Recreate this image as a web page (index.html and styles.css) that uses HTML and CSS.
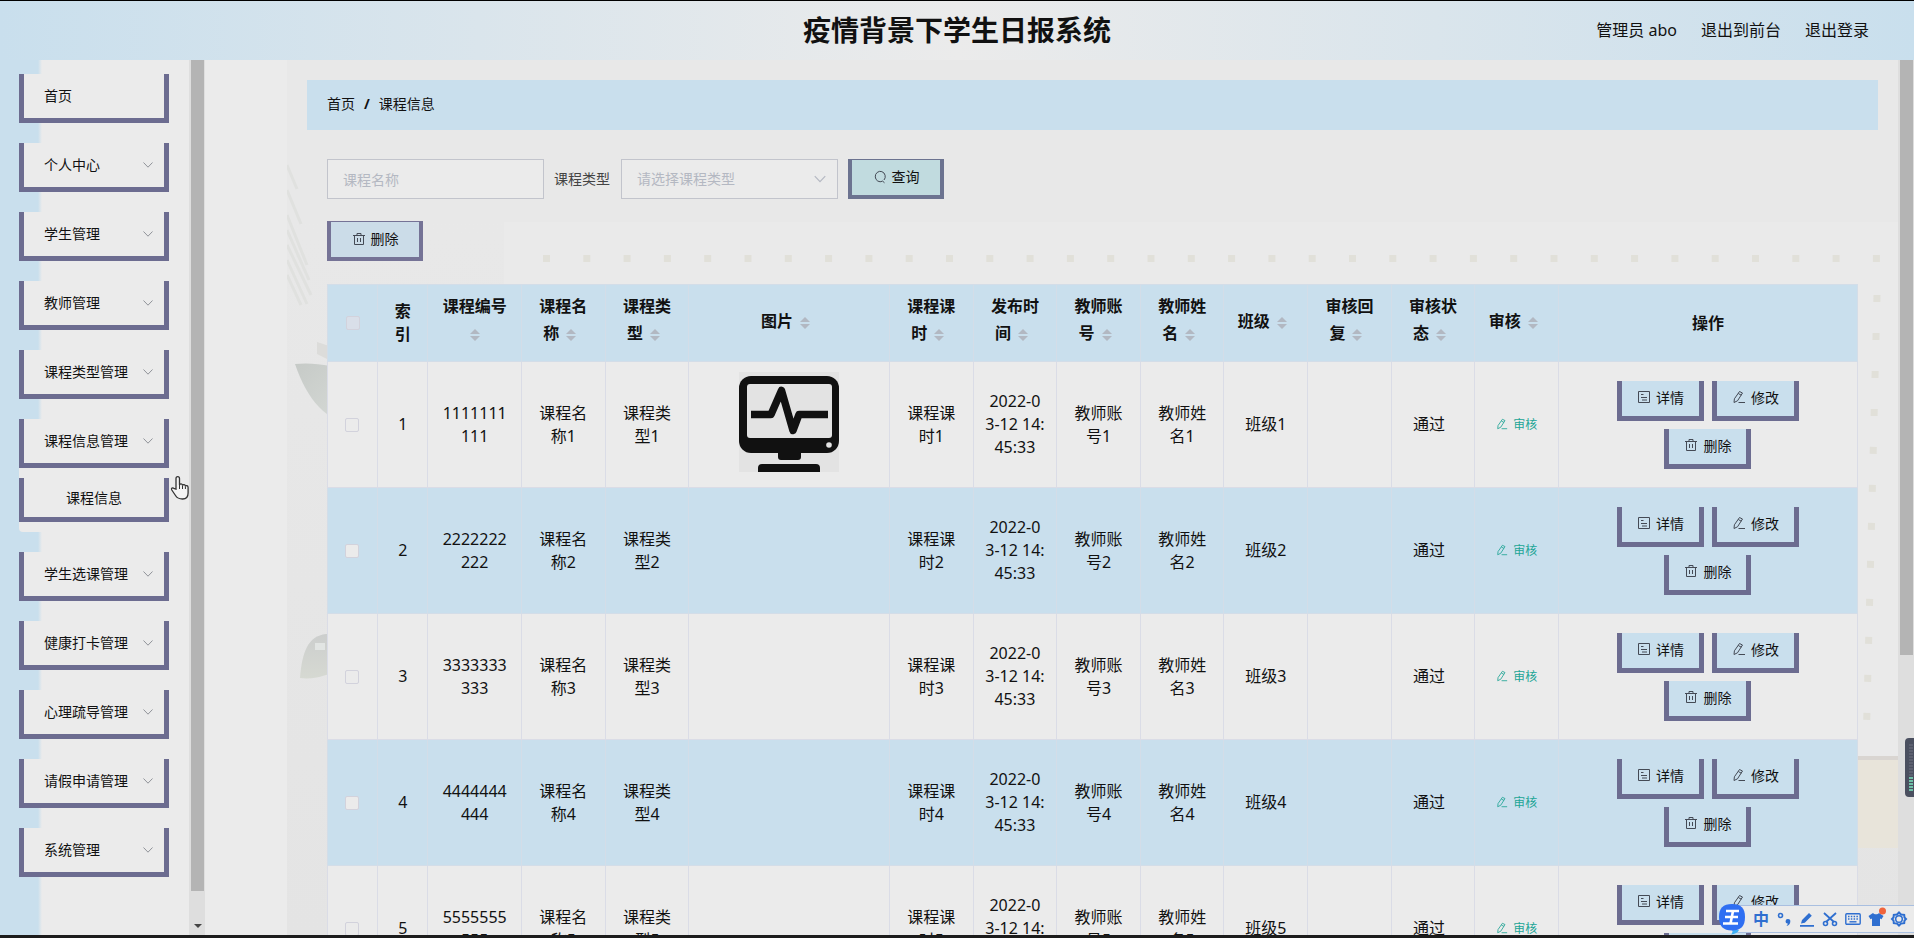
FILE: index.html
```html
<!DOCTYPE html>
<html lang="zh-CN">
<head>
<meta charset="utf-8">
<title>疫情背景下学生日报系统</title>
<link rel="stylesheet" href="styles.css">
</head>
<body>
<svg class="defs" aria-hidden="true">
  <symbol id="i-down" viewBox="0 0 12 12"><path d="M1.5 3.5 6 8.2l4.500-4.700" fill="none" stroke="currentColor"/></symbol>
  <symbol id="i-trash" viewBox="0 0 14 14"><path d="M1 3.500h12M2.500 3.500v9h9v-9M5 3.500v-2h4v2M5.500 6v4M8.500 6v4" fill="none" stroke="currentColor"/></symbol>
  <symbol id="i-search" viewBox="0 0 14 14"><path d="M9.500 11.200A5 5.200 0 1 1 11 10M9.500 11l2 1.800" fill="none" stroke="currentColor"/></symbol>
  <symbol id="i-doc" viewBox="0 0 14 14"><path d="M1.500 1.500h11v11h-11zM4 4.500h2.500M4 7.500h6M5 10h5" fill="none" stroke="currentColor"/></symbol>
  <symbol id="i-edit" viewBox="0 0 14 14"><path d="M7.500 1.500 10.500 3 5.500 10.800l-3.500 1.700.4-3.700zM6.300 3.500 9.300 5.200M6.500 12.500h6.500" fill="none" stroke="currentColor"/></symbol>
</svg>
<div class="app">
  <header class="topbar">
    <h1 class="title">疫情背景下学生日报系统</h1>
    <nav class="user"><span>管理员 abo</span><a href="#">退出到前台</a><a href="#">退出登录</a></nav>
  </header>
  <div class="body">
    <aside class="side">
      <nav class="menu" id="menu"></nav>
      <div class="bar side-bar"><div class="thumb"></div><div class="arrow"></div></div>
    </aside>
    <main class="main">
      <svg class="decor" viewBox="0 0 1612 875" preserveAspectRatio="xMinYMin slice" aria-hidden="true">
        <defs>
          <linearGradient id="shade" x1="0" x2="0" y1="0" y2="1"><stop offset="0" stop-color="#e9e9e9"/><stop offset="1" stop-color="#e4e4e4"/></linearGradient>
          <linearGradient id="leaf" x1="0" x2="1" y1="0" y2="1"><stop offset="0" stop-color="#c6cac7"/><stop offset="1" stop-color="#d8dcd8"/></linearGradient>
          <linearGradient id="leaf2" x1="0" x2="0" y1="0" y2="1"><stop offset="0" stop-color="#cccecd"/><stop offset="1" stop-color="#d6d9d2"/></linearGradient>
        </defs>
        <rect width="1612" height="875" fill="url(#shade)"/>
        <rect width="1612" height="162" fill="#e8e8e8"/>
        <path d="M217 162h1395v535H217z" fill="#eaeaea"/>
        <path d="M0 105l10 24M0 130l14 34M0 155l20 50M0 170l22 50M0 185l24 50M0 200l20 44M0 215l14 30" stroke="#e0e1df" stroke-width="3"/>
        <path d="M8 304c20-2 40 2 60 8v54C40 362 20 340 8 304z" fill="url(#leaf)"/>
        <path d="M30 282l12 4v14l-12-6z" fill="#dcdcda"/>
        <path d="M13 618c2-26 8-42 26-44h20v32c-14 8-30 14-46 12z" fill="url(#leaf2)"/>
        <path d="M28 583h10v7H28z" fill="#e2e5e3"/>
        <path d="M256 198.500h1350" stroke="#e1e0d9" stroke-width="7" stroke-dasharray="7 33.300"/>
        <path d="M1590 235 1579 690" stroke="#e1e0d9" stroke-width="7" stroke-dasharray="7 31"/>
        <path d="M1400 697h212v91h-212z" fill="#e8e4da"/>
        <path d="M1400 696h212v4h-212z" fill="#d9d5d1"/>
      </svg>
      <div class="content">
        <nav class="crumb"><a href="#">首页</a><b>/</b><span>课程信息</span></nav>
        <form class="search">
          <input class="field" type="text" placeholder="课程名称" aria-label="课程名称">
          <label for="kind">课程类型</label>
          <span class="pick">
            <select class="field" id="kind"><option>请选择课程类型</option></select>
            <svg class="pick-icon"><use href="#i-down"/></svg>
          </span>
          <button class="btn btn-box btn-query" type="button"><svg class="icon"><use href="#i-search"/></svg>查询</button>
        </form>
        <div class="tools"><button class="btn btn-box btn-remove" type="button"><svg class="icon"><use href="#i-trash"/></svg>删除</button></div>
        <table class="grid">
          <colgroup><col class="c-s"><col class="c-s"><col class="c-no"><col class="c-m"><col class="c-m"><col class="c-img"><col class="c-m"><col class="c-m"><col class="c-m"><col class="c-m"><col class="c-m"><col class="c-m"><col class="c-m"><col class="c-m"><col class="c-op"></colgroup>
          <thead><tr id="head"></tr></thead>
          <tbody id="rows"></tbody>
        </table>
      </div>
    </main>
    <div class="bar page-bar"><div class="thumb"></div></div>
  </div>
  <div class="foot"></div>
</div>

<svg class="cursor" viewBox="0 0 20 26" aria-hidden="true"><path d="M6 14V3.500c0-2.600 3.500-2.600 3.500 0V10c.4-1.600 3-1.400 3 .4.500-1.300 2.900-1 2.900.8.600-1.100 2.700-.8 2.700 1.200V18c0 3.500-2 6-5.500 6S7 23 5.500 20.500L1.800 15c-1-1.600.8-2.800 2-1.700z" fill="#f4f4f4" stroke="#333" stroke-width="1.300"/><path d="M9.500 10v4M12.500 10.500V14M15.400 11.300V14" stroke="#333" fill="none"/></svg>

<div class="meter" aria-hidden="true"></div>

<div class="ime">
  <svg class="ime-logo" viewBox="0 0 28 32"><path d="M14 27h7c-1 2.500-4 4-8 4.500 1.500-1 2-3 1-4.500z" fill="#3fb2f5"/><path d="M14 1c9 0 13 4 13 13s-4 13.500-13 13.500S1 23 1 14 5 1 14 1z" fill="#2f6ff2"/><path d="M8 8h13M7 14h13M5 20.500h15M15 8l-2.500 12.500" stroke="#fff" stroke-width="2.600" fill="none"/></svg>
  <span class="ime-zh">中</span>
  <svg class="ime-i" viewBox="0 0 16 16"><circle cx="4.500" cy="4.500" r="2" fill="none" stroke="#2f6fd0" stroke-width="1.600"/><path d="M12 8a2.400 2.400 0 0 1 2.300 2.700c0 2.200-1.600 3.900-3.800 4.400.8-.9 1.300-1.700 1.200-2.500A2.300 2.300 0 0 1 12 8z" fill="#2f6fd0"/></svg>
  <svg class="ime-i" viewBox="0 0 16 16"><path d="M2 12.500 3 9l7-7 2.800 2.800-7 7zM1 14h14v1.800H1z" fill="#2f6fd0"/></svg>
  <svg class="ime-i" viewBox="0 0 16 16"><path d="M2 2l10 9M14 2 4 11" stroke="#2f6fd0" stroke-width="1.800" fill="none"/><circle cx="3.500" cy="12.500" r="2" fill="none" stroke="#2f6fd0" stroke-width="1.600"/><circle cx="12.500" cy="12.500" r="2" fill="none" stroke="#2f6fd0" stroke-width="1.600"/></svg>
  <svg class="ime-i" viewBox="0 0 16 16"><rect x=".8" y="2.800" width="14.400" height="10.400" rx="1" fill="none" stroke="#2f6fd0" stroke-width="1.400"/><path d="M3 5.500h10M3 8h10" stroke="#2f6fd0" stroke-width="1.400" stroke-dasharray="1.500 1.300"/><path d="M4.500 10.800h7" stroke="#2f6fd0" stroke-width="1.400"/></svg>
  <svg class="ime-i" viewBox="0 0 16 16"><path d="M5 2c1 1.800 5 1.800 6 0l4.500 3-2 3.300L12 7.500V15H4V7.500l-1.500.8L.5 5z" fill="#2f6fd0"/><circle cx="14.500" cy="0" r="3.500" fill="#f0643c"/></svg>
  <svg class="ime-i" viewBox="0 0 16 16"><path d="M8 1.500 10 3.500l3.200.3.300 2.700L15 8l-1.500 1.500-.3 2.700-3.200.3L8 14.500l-2-2-3.200-.3-.3-2.700L1 8l1.500-1.500.3-2.700L6 3.500z" fill="none" stroke="#2f6fd0" stroke-width="2"/><circle cx="8" cy="8" r="3.300" fill="none" stroke="#2f6fd0" stroke-width="1.500"/></svg>
</div>
<script src="app.js"></script>
</body>
</html>
```

FILE: styles.css
```css
* { box-sizing: border-box; }

body {
  margin: 0;
  background: #ebebeb;
  color: #111;
  font: 14px/20px "Noto Sans", "Noto Sans CJK SC", sans-serif;
}

a { color: inherit; text-decoration: none; }
button, input, select { font: inherit; color: inherit; }
.defs { position: absolute; width: 0; height: 0; }

.app {
  display: flex;
  flex-direction: column;
  height: 100vh;
  overflow: hidden;
  border-top: 1px solid #000;
}

.topbar {
  display: grid;
  grid-template-columns: 1fr auto 1fr;
  align-items: center;
  flex: none;
  height: 59px;
  padding: 0 45px 2px;
  background: linear-gradient(90deg, #c9dfed, #ebebeb 50%, #c9dfed);
}

.title {
  grid-column: 2;
  margin: 0;
  font-size: 28px;
  line-height: 40px;
}

.user {
  display: flex;
  justify-content: flex-end;
  gap: 24px;
  font-size: 16px;
}

.body { display: flex; flex: 1; min-height: 0; }
.foot { flex: none; height: 3px; background: #1c1c1c; }

.side {
  display: flex;
  flex: none;
  width: 287px;
  background: linear-gradient(90deg, #c9dfed 38px, #ebebeb 42px);
}

.menu { flex: none; width: 189px; padding: 14px 20px 0 19px; }

.item {
  display: flex;
  align-items: center;
  justify-content: space-between;
  width: 100%;
  height: 49px;
  margin: 0 0 20px;
  padding: 0 10px 0 20px;
  border: solid #6c6c90;
  border-width: 0 5px 5px;
  background: #ebebeb;
}

.item svg { width: 12px; height: 12px; color: #909399; }
.item.open { margin-bottom: 0; }

.sub {
  margin-bottom: 20px;
  padding: 10px 0;
  border-radius: 0 0 4px 4px;
  background: #ebebeb;
}

.sub .item { justify-content: center; height: 44px; margin: 0; padding: 0; }

.bar { display: flex; flex-direction: column; flex: none; width: 16px; padding: 0 1px 0 2px; background: #dedede; }
.thumb { background: #b4b4b4; }
.side-bar { justify-content: space-between; }
.side-bar .thumb { height: 95%; }
.arrow { align-self: center; margin-bottom: 7px; border: 4px solid transparent; border-top-color: #444; border-bottom: 0; }
.page-bar .thumb { height: 68%; }

.main { position: relative; flex: 1; min-width: 0; overflow: hidden; }
.decor { position: absolute; inset: 0; width: 100%; height: 100%; }
.content { position: relative; padding: 20px 20px 0; }

.crumb {
  display: flex;
  align-items: center;
  gap: 9px;
  height: 50px;
  padding: 0 20px 2px;
  background: #c9dfed;
}

.search, .tools { display: flex; align-items: center; padding: 0 20px; }
.search { gap: 10px; margin-top: 29px; }
.tools { margin-top: 22px; }
.search label { margin-right: 1px; color: #444; }

.field {
  width: 217px;
  height: 40px;
  padding: 0 15px;
  border: 1px solid #c2c4cc;
  border-radius: 0;
  background: #ebebeb;
  color: #b4b8c2;
  appearance: none;
}

.field::placeholder { color: #b4b8c2; }
.pick { position: relative; display: flex; }
.pick-icon { position: absolute; right: 11px; top: 13px; width: 14px; height: 14px; color: #b4b8c2; pointer-events: none; }

.btn {
  display: inline-flex;
  align-items: center;
  justify-content: center;
  gap: 5px;
  width: 87px;
  height: 40px;
  padding: 0 0 2px;
  border: solid #6c6c90;
  border-width: 0 5px 5px;
  background: #c9dfed;
}

.icon { width: 14px; height: 14px; color: #444a55; }
.btn-box { width: 96px; border-width: 1px 4px 4px; }
.btn-query { border-color: #6c7390; background: #c1dbdf; }
.btn-remove { border-color: #757396; background: #cbdce8; }

.grid {
  width: calc(100% - 40px);
  margin: 23px 20px 0;
  border-collapse: collapse;
  table-layout: fixed;
  font-size: 16px;
  line-height: 23px;
  text-align: center;
}

.c-s { width: 45px; }
.c-no { width: 84px; }
.c-m { width: 75px; }
.c-img { width: 180px; }
.c-op { width: 268px; }

.grid th, .grid td { padding: 0 10px; border: 1px solid #dadce6; word-break: break-all; }
.grid th { height: 77px; border-color: #d3dde8; background: #c9dfed; }
.grid td { height: 126px; background: #ebebeb; }
.grid tr:nth-child(even) td { border-color: #d3dde8; background: #c9dfed; }
.grid .date { padding: 0; white-space: nowrap; }
.grid .pic { padding-bottom: 5px; }
.grid .state { padding-right: 18px; }
.grid .tick { padding-right: 12px; }

.check {
  display: block;
  width: 14px;
  height: 14px;
  margin: 0 auto;
  border: 1px solid #d2d2dc;
  border-radius: 2px;
  background: #ebebeb;
  appearance: none;
}

th .check { background: #d9dfe9; }

.sort { display: inline-flex; flex-direction: column; align-items: center; justify-content: center; gap: 2px; width: 24px; height: 34px; vertical-align: middle; }
.sort::before, .sort::after { content: ""; border: 5px solid transparent; }
.sort::before { border-top: 0; border-bottom-color: #b2b8c2; }
.sort::after { border-bottom: 0; border-top-color: #b2b8c2; }

.audit {
  display: inline-flex;
  align-items: center;
  gap: 5px;
  padding: 0;
  border: 0;
  background: none;
  color: #22a596;
  font-size: 12px;
}

.audit svg { width: 12px; height: 12px; }
.photo { display: block; width: 100px; height: 100px; margin: 0 auto; background: #e3e3e3; }
.ops { display: flex; flex-wrap: wrap; justify-content: center; gap: 8px; width: 184px; margin: 0 auto; font-size: 14px; }

.cursor { position: absolute; left: 170px; top: 475px; width: 20px; height: 26px; }

.meter {
  position: absolute;
  right: 0;
  top: 738px;
  width: 9px;
  height: 59px;
  border: solid #4b5060;
  border-width: 6px 1px 6px 4px;
  border-radius: 4px 0 0 4px;
  background: repeating-linear-gradient(transparent 0 2px, #4b5060 2px 3px), linear-gradient(#5c6070 68%, #6fc0a8 68%);
}

.ime {
  position: absolute;
  right: 0;
  bottom: 5px;
  display: flex;
  align-items: center;
  gap: 7px;
  height: 28px;
  padding-right: 7px;
  border: solid #a9bfe0;
  border-width: 1px 0;
  background: #ebebeb;
}

.ime-logo { width: 28px; height: 32px; margin-left: -14px; }
.ime-zh { width: 16px; color: #2f6fd0; font-size: 16px; font-weight: 700; }
.ime-i { width: 16px; height: 16px; overflow: visible; }
```

FILE: app.js
```js
const use = (id, cls) => `<svg class="${cls}"><use href="#${id}"/></svg>`;

const menu = ["首页", "个人中心", "学生管理", "教师管理", "课程类型管理", "课程信息管理",
  "学生选课管理", "健康打卡管理", "心理疏导管理", "请假申请管理", "系统管理"];
document.getElementById("menu").innerHTML = menu.map((name, i) => {
  const open = name === "课程信息管理";
  return `<button type="button" class="item${open ? " open" : ""}">${name}${i ? use("i-down", "") : ""}</button>` +
    (open ? `<div class="sub"><button type="button" class="item">课程信息</button></div>` : "");
}).join("");

const heads = ["课程编号", "课程名称", "课程类型", "图片", "课程课时", "发布时间", "教师账号",
  "教师姓名", "班级", "审核回复", "审核状态", "审核"];
document.getElementById("head").innerHTML =
  `<th><input class="check" type="checkbox" aria-label="全选"></th><th>索引</th>` +
  heads.map(h => `<th>${h}<i class="sort"></i></th>`).join("") + `<th>操作</th>`;

const photo = `<svg class="photo" viewBox="0 0 100 100" role="img" aria-label="图片">
  <rect y="4" width="100" height="77" rx="12" fill="#111"/>
  <rect x="8" y="12" width="85" height="54" rx="3" fill="#e3e3e3"/>
  <path d="M12 42.500h20L42.500 18.500 54 58.500l6-16h29" fill="none" stroke="#111" stroke-width="7.500" stroke-linejoin="round"/>
  <circle cx="90" cy="73" r="2.800" fill="#e3e3e3"/>
  <path d="M39 80h23v5q0 3-3 3H42q-3 0-3-3zM19 100v-4q0-4 4-4h54q4 0 4 4v4z" fill="#111"/></svg>`;
const button = (icon, text) => `<button type="button" class="btn">${use(icon, "icon")}${text}</button>`;

document.getElementById("rows").innerHTML = [1, 2, 3, 4, 5].map(n => `<tr>
  <td class="tick"><input class="check" type="checkbox" aria-label="选择第${n}行"></td>
  <td>${n}</td><td>${String(n).repeat(7)}<br>${String(n).repeat(3)}</td>
  <td>课程名称${n}</td><td>课程类型${n}</td><td class="pic">${n === 1 ? photo : ""}</td><td>课程课时${n}</td>
  <td class="date">2022-0<br>3-12 14:<br>45:33</td>
  <td>教师账号${n}</td><td>教师姓名${n}</td><td>班级${n}</td><td></td><td class="state">通过</td>
  <td><button type="button" class="audit">${use("i-edit", "")}审核</button></td>
  <td><div class="ops">${button("i-doc", "详情")}${button("i-edit", "修改")}${button("i-trash", "删除")}</div></td>
</tr>`).join("");
```
